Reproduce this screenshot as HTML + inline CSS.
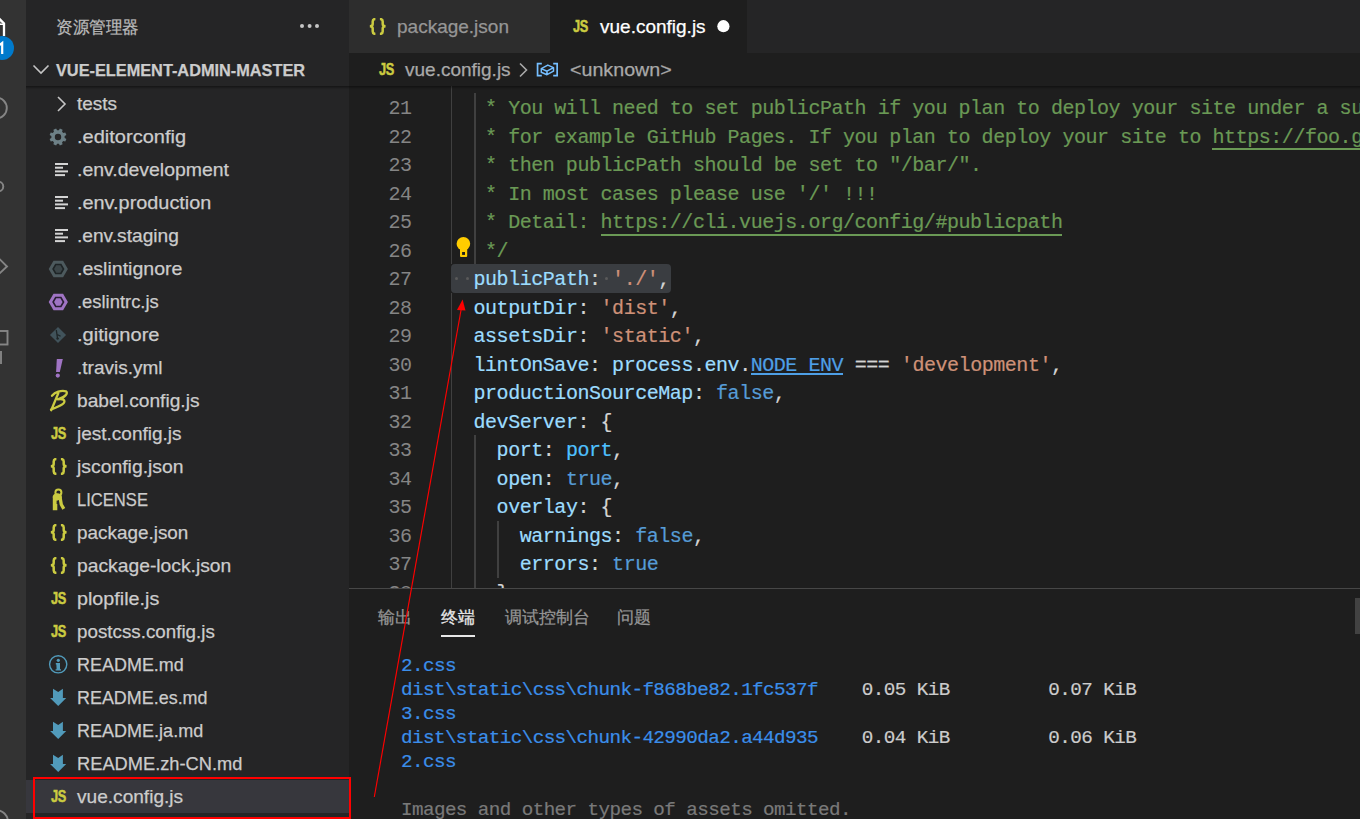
<!DOCTYPE html>
<html><head><meta charset="utf-8"><style>
*{margin:0;padding:0;box-sizing:border-box}
html,body{width:1360px;height:819px;overflow:hidden;background:#1e1e1e}
body{position:relative;font-family:"Liberation Sans",sans-serif}
.a{position:absolute}
.ui{font-family:"Liberation Sans",sans-serif;white-space:nowrap;transform-origin:0 50%;-webkit-text-stroke:0.25px currentColor}
.ln{left:0;width:62.5px;text-align:right;font-family:"Liberation Mono",monospace;font-size:20px;letter-spacing:-0.454px;line-height:28.5px;color:#858585}
.cl{left:101.4px;font-family:"Liberation Mono",monospace;font-size:20px;letter-spacing:-0.454px;line-height:28.5px;color:#d4d4d4;white-space:pre;-webkit-text-stroke:0.2px currentColor}
.c{color:#6a9955}.p{color:#9cdcfe}.s{color:#ce9178}.k{color:#569cd6}.v{color:#4fc1ff}
.u{text-decoration:underline;text-underline-offset:3px;text-decoration-thickness:1.5px}
.tl{left:401px;font-family:"Liberation Mono",monospace;font-size:19.25px;letter-spacing:-0.58px;line-height:24px;white-space:pre;color:#3b8eea;-webkit-text-stroke:0.2px currentColor}
</style></head><body>
<div class="a" style="left:0;top:0;width:26px;height:819px;background:#333333"></div>
<svg class="a" style="left:0px;top:0px" width="26" height="819" viewBox="0 0 26 819"><path d="M-8 36 L-8 19 L-0.5 19 L4 23.5 L4 36" fill="none" stroke="#ffffff" stroke-width="2.3"/><path d="M-0.5 19 L-0.5 24.3 L4 24.3" fill="none" stroke="#ffffff" stroke-width="1.4"/><circle cx="2" cy="48" r="12" fill="#007acc"/><path d="M-1 45.5 L2.2 43 L2.2 54" fill="none" stroke="#fff" stroke-width="2.2"/><circle cx="-3.5" cy="108" r="10.3" fill="none" stroke="#858585" stroke-width="1.9"/><circle cx="-1.5" cy="186.5" r="4.8" fill="none" stroke="#858585" stroke-width="1.9"/><path d="M-1 258.5 L7 266.5 L-1 274" fill="none" stroke="#858585" stroke-width="1.9"/><rect x="-6" y="331" width="13.5" height="13.5" fill="none" stroke="#858585" stroke-width="1.9"/><path d="M1 351 L1 364" fill="none" stroke="#858585" stroke-width="1.9"/><circle cx="-4" cy="822" r="12" fill="none" stroke="#858585" stroke-width="1.9"/></svg>
<div class="a" style="left:26px;top:0;width:323px;height:819px;background:#252526"></div>
<div class="a ui" style="left:56px;top:15px;font-size:16.5px;line-height:24px;color:#bbbbbb;transform:scaleX(0.975)">资源管理器</div>
<svg class="a" style="left:296px;top:20px" width="28" height="12" viewBox="0 0 28 12"><circle cx="6" cy="6" r="2" fill="#c5c5c5"/><circle cx="13.600000000000023" cy="6" r="2" fill="#c5c5c5"/><circle cx="21" cy="6" r="2" fill="#c5c5c5"/></svg>
<svg class="a" style="left:30px;top:60px" width="22" height="18" viewBox="0 0 22 18"><path d="M3.5 5.5 L11 13 L18.5 5.5" fill="none" stroke="#c5c5c5" stroke-width="1.6"/></svg>
<div class="a ui" style="left:56px;top:58px;font-weight:bold;font-size:16.5px;line-height:24px;color:#cccccc;transform:scaleX(0.988)">VUE-ELEMENT-ADMIN-MASTER</div>
<div class="a" style="left:26px;top:86px;width:323px;height:4px;background:linear-gradient(rgba(0,0,0,0.45),rgba(0,0,0,0.12) 60%,rgba(0,0,0,0))"></div>
<svg class="a" style="left:54px;top:94.5px" width="14" height="18" viewBox="0 0 14 18"><path d="M4 2 L11 9 L4 16" fill="none" stroke="#c5c5c5" stroke-width="1.6"/></svg>
<div class="a ui" style="left:77px;top:87px;line-height:33px;font-size:19px;color:#cccccc;transform:scaleX(0.9949)">tests</div>
<svg class="a" style="left:48.4px;top:126.5px" width="20" height="20" viewBox="0 0 20 20"><path d="M16.64,10.89 L18.39,11.90 L17.27,14.59 L15.32,14.07 L14.07,15.32 L14.59,17.27 L11.90,18.39 L10.89,16.64 L9.11,16.64 L8.10,18.39 L5.41,17.27 L5.93,15.32 L4.68,14.07 L2.73,14.59 L1.61,11.90 L3.36,10.89 L3.36,9.11 L1.61,8.10 L2.73,5.41 L4.68,5.93 L5.93,4.68 L5.41,2.73 L8.10,1.61 L9.11,3.36 L10.89,3.36 L11.90,1.61 L14.59,2.73 L14.07,4.68 L15.32,5.93 L17.27,5.41 L18.39,8.10 L16.64,9.11 Z M13.2 10 A3.2 3.2 0 1 0 6.8 10 A3.2 3.2 0 1 0 13.2 10 Z" fill="#6d8086" fill-rule="evenodd"/></svg>
<div class="a ui" style="left:77px;top:120px;line-height:33px;font-size:19px;color:#cccccc;transform:scaleX(1.0539)">.editorconfig</div>
<svg class="a" style="left:55px;top:162.5px" width="14" height="14" viewBox="0 0 14 14"><rect x="0" y="0" width="13" height="2" fill="#d4d4d4"/><rect x="0" y="3.7" width="8" height="2" fill="#d4d4d4"/><rect x="0" y="7.4" width="13" height="2" fill="#d4d4d4"/><rect x="0" y="11.1" width="10" height="2" fill="#d4d4d4"/></svg>
<div class="a ui" style="left:77px;top:153px;line-height:33px;font-size:19px;color:#cccccc;transform:scaleX(1.0230)">.env.development</div>
<svg class="a" style="left:55px;top:195.5px" width="14" height="14" viewBox="0 0 14 14"><rect x="0" y="0" width="13" height="2" fill="#d4d4d4"/><rect x="0" y="3.7" width="8" height="2" fill="#d4d4d4"/><rect x="0" y="7.4" width="13" height="2" fill="#d4d4d4"/><rect x="0" y="11.1" width="10" height="2" fill="#d4d4d4"/></svg>
<div class="a ui" style="left:77px;top:186px;line-height:33px;font-size:19px;color:#cccccc;transform:scaleX(1.0457)">.env.production</div>
<svg class="a" style="left:55px;top:228.5px" width="14" height="14" viewBox="0 0 14 14"><rect x="0" y="0" width="13" height="2" fill="#d4d4d4"/><rect x="0" y="3.7" width="8" height="2" fill="#d4d4d4"/><rect x="0" y="7.4" width="13" height="2" fill="#d4d4d4"/><rect x="0" y="11.1" width="10" height="2" fill="#d4d4d4"/></svg>
<div class="a ui" style="left:77px;top:219px;line-height:33px;font-size:19px;color:#cccccc;transform:scaleX(1.0080)">.env.staging</div>
<svg class="a" style="left:48px;top:258.5px" width="21" height="20" viewBox="0 0 21 20"><polygon points="19.90,10.00 15.10,18.31 5.50,18.31 0.70,10.00 5.50,1.69 15.10,1.69" fill="#4d5a5e"/><polygon points="15.50,10.00 12.90,14.50 7.70,14.50 5.10,10.00 7.70,5.50 12.90,5.50" fill="#3b4548" stroke="#1e2426" stroke-width="1.6"/></svg>
<div class="a ui" style="left:77px;top:252px;line-height:33px;font-size:19px;color:#cccccc;transform:scaleX(1.0297)">.eslintignore</div>
<svg class="a" style="left:48px;top:291.5px" width="21" height="20" viewBox="0 0 21 20"><polygon points="19.90,10.00 15.10,18.31 5.50,18.31 0.70,10.00 5.50,1.69 15.10,1.69" fill="#a074c4"/><polygon points="15.50,10.00 12.90,14.50 7.70,14.50 5.10,10.00 7.70,5.50 12.90,5.50" fill="#a074c4" stroke="#2a1f33" stroke-width="1.6"/></svg>
<div class="a ui" style="left:77px;top:285px;line-height:33px;font-size:19px;color:#cccccc;transform:scaleX(0.9679)">.eslintrc.js</div>
<svg class="a" style="left:49px;top:325.5px" width="18" height="18" viewBox="0 0 18 18"><rect x="3.3" y="3.3" width="11.4" height="11.4" transform="rotate(45 9 9)" fill="#41535b"/><path d="M7.3 3.8 L8.6 13 M8.2 8.5 L11.6 10.3" stroke="#1f2628" stroke-width="1.3" fill="none"/><circle cx="8.6" cy="12.6" r="1.2" fill="#1f2628"/></svg>
<div class="a ui" style="left:77px;top:318px;line-height:33px;font-size:19px;color:#cccccc;transform:scaleX(1.0558)">.gitignore</div>
<svg class="a" style="left:52px;top:355.5px" width="14" height="24" viewBox="0 0 14 24"><path d="M4.8 3 L10.8 3 L7.8 16 L4.1 16 Z" fill="#a074c4"/><circle cx="5.8" cy="19.6" r="2.1" fill="#a074c4"/></svg>
<div class="a ui" style="left:77px;top:351px;line-height:33px;font-size:19px;color:#cccccc;transform:scaleX(1.0000)">.travis.yml</div>
<svg class="a" style="left:45px;top:385px" width="30" height="30" viewBox="0 0 30 30"><path d="M7 10.8 C10 7.2, 16 5, 21 6.3 C23.5 7.8, 20.5 12.3, 12.8 14.3 C18 13.3, 21 15.3, 18.6 18.2 C16 20.8, 10.5 22.6, 6 24.6 M13.3 8.3 L6.2 25.3" fill="none" stroke="#cbcb41" stroke-width="2.3" stroke-linecap="round" stroke-linejoin="round"/></svg>
<div class="a ui" style="left:77px;top:384px;line-height:33px;font-size:19px;color:#cccccc;transform:scaleX(1.0083)">babel.config.js</div>
<div class="a" style="left:51px;top:428px;font:bold 15.6px 'Liberation Sans';color:#cbcb41;letter-spacing:-0.5px;line-height:12px;transform:scaleX(0.82);transform-origin:0 0;-webkit-text-stroke:0.5px #cbcb41">JS</div>
<div class="a ui" style="left:77px;top:417px;line-height:33px;font-size:19px;color:#cccccc;transform:scaleX(1.0000)">jest.config.js</div>
<svg class="a" style="left:50px;top:458.0px" width="18" height="17" viewBox="0 0 18 17"><path d="M6.4 1 C4.4 1 3.7 1.9 3.7 3.6 L3.7 6 C3.7 7.3 2.6 8.2 0.9 8.3 C2.6 8.4 3.7 9.3 3.7 10.6 L3.7 13.6 C3.7 15.1 4.4 15.9 6.4 15.9" fill="none" stroke="#cbcb41" stroke-width="2.5"/><path d="M10.9 1 C12.9 1 13.7 1.9 13.7 3.6 L13.7 6 C13.7 7.3 14.8 8.2 16.5 8.3 C14.8 8.4 13.7 9.3 13.7 10.6 L13.7 13.6 C13.7 15.1 12.9 15.9 10.9 15.9" fill="none" stroke="#cbcb41" stroke-width="2.5"/></svg>
<div class="a ui" style="left:77px;top:450px;line-height:33px;font-size:19px;color:#cccccc;transform:scaleX(1.0194)">jsconfig.json</div>
<svg class="a" style="left:45px;top:485px" width="30" height="30" viewBox="0 0 30 30"><circle cx="13.4" cy="7.4" r="3" fill="none" stroke="#cbcb41" stroke-width="2"/><ellipse cx="12.3" cy="11.8" rx="4.6" ry="3.6" fill="#cbcb41"/><path d="M7.8 12 L12.3 12 L12.3 15.5 L11 16 L12.3 17 L11 18 L12.3 19 L12.3 25.3 L7.8 25.3 Z" fill="#cbcb41"/><path d="M15 12 L16.3 19.5 L18.8 23.8" fill="none" stroke="#cbcb41" stroke-width="3.3" stroke-linejoin="round"/></svg>
<div class="a ui" style="left:77px;top:483px;line-height:33px;font-size:19px;color:#cccccc;transform:scaleX(0.8725)">LICENSE</div>
<svg class="a" style="left:50px;top:524.0px" width="18" height="17" viewBox="0 0 18 17"><path d="M6.4 1 C4.4 1 3.7 1.9 3.7 3.6 L3.7 6 C3.7 7.3 2.6 8.2 0.9 8.3 C2.6 8.4 3.7 9.3 3.7 10.6 L3.7 13.6 C3.7 15.1 4.4 15.9 6.4 15.9" fill="none" stroke="#cbcb41" stroke-width="2.5"/><path d="M10.9 1 C12.9 1 13.7 1.9 13.7 3.6 L13.7 6 C13.7 7.3 14.8 8.2 16.5 8.3 C14.8 8.4 13.7 9.3 13.7 10.6 L13.7 13.6 C13.7 15.1 12.9 15.9 10.9 15.9" fill="none" stroke="#cbcb41" stroke-width="2.5"/></svg>
<div class="a ui" style="left:77px;top:516px;line-height:33px;font-size:19px;color:#cccccc;transform:scaleX(0.9946)">package.json</div>
<svg class="a" style="left:50px;top:557.0px" width="18" height="17" viewBox="0 0 18 17"><path d="M6.4 1 C4.4 1 3.7 1.9 3.7 3.6 L3.7 6 C3.7 7.3 2.6 8.2 0.9 8.3 C2.6 8.4 3.7 9.3 3.7 10.6 L3.7 13.6 C3.7 15.1 4.4 15.9 6.4 15.9" fill="none" stroke="#cbcb41" stroke-width="2.5"/><path d="M10.9 1 C12.9 1 13.7 1.9 13.7 3.6 L13.7 6 C13.7 7.3 14.8 8.2 16.5 8.3 C14.8 8.4 13.7 9.3 13.7 10.6 L13.7 13.6 C13.7 15.1 12.9 15.9 10.9 15.9" fill="none" stroke="#cbcb41" stroke-width="2.5"/></svg>
<div class="a ui" style="left:77px;top:549px;line-height:33px;font-size:19px;color:#cccccc;transform:scaleX(1.0146)">package-lock.json</div>
<div class="a" style="left:51px;top:593px;font:bold 15.6px 'Liberation Sans';color:#cbcb41;letter-spacing:-0.5px;line-height:12px;transform:scaleX(0.82);transform-origin:0 0;-webkit-text-stroke:0.5px #cbcb41">JS</div>
<div class="a ui" style="left:77px;top:582px;line-height:33px;font-size:19px;color:#cccccc;transform:scaleX(1.0385)">plopfile.js</div>
<div class="a" style="left:51px;top:626px;font:bold 15.6px 'Liberation Sans';color:#cbcb41;letter-spacing:-0.5px;line-height:12px;transform:scaleX(0.82);transform-origin:0 0;-webkit-text-stroke:0.5px #cbcb41">JS</div>
<div class="a ui" style="left:77px;top:615px;line-height:33px;font-size:19px;color:#cccccc;transform:scaleX(0.9885)">postcss.config.js</div>
<svg class="a" style="left:45px;top:650px" width="30" height="33" viewBox="0 0 30 33"><circle cx="13.2" cy="14.3" r="8.6" fill="none" stroke="#519aba" stroke-width="1.4"/><circle cx="13.3" cy="10.3" r="1.6" fill="#519aba"/><path d="M11.3 13 L14.9 13 L14.9 19.2 L11.6 19.2 Z M10.6 19.2 L16 19.2 L16 20.5 L10.6 20.5 Z M10.8 13 L11.6 13 L11.6 14.4 L10.8 14.4 Z" fill="#519aba"/><rect x="12" y="13" width="3" height="6.3" fill="#519aba"/></svg>
<div class="a ui" style="left:77px;top:648px;line-height:33px;font-size:19px;color:#cccccc;transform:scaleX(0.9455)">README.md</div>
<svg class="a" style="left:45px;top:683px" width="30" height="33" viewBox="0 0 30 33"><path d="M8 5.8 L13.2 9 L17.9 5.8 L17.9 14.9 L21.2 14.9 L13.2 23 L5.1 14.9 L8 14.9 Z" fill="#519aba"/></svg>
<div class="a ui" style="left:77px;top:681px;line-height:33px;font-size:19px;color:#cccccc;transform:scaleX(0.9438)">README.es.md</div>
<svg class="a" style="left:45px;top:716px" width="30" height="33" viewBox="0 0 30 33"><path d="M8 5.8 L13.2 9 L17.9 5.8 L17.9 14.9 L21.2 14.9 L13.2 23 L5.1 14.9 L8 14.9 Z" fill="#519aba"/></svg>
<div class="a ui" style="left:77px;top:714px;line-height:33px;font-size:19px;color:#cccccc;transform:scaleX(0.9485)">README.ja.md</div>
<svg class="a" style="left:45px;top:749px" width="30" height="33" viewBox="0 0 30 33"><path d="M8 5.8 L13.2 9 L17.9 5.8 L17.9 14.9 L21.2 14.9 L13.2 23 L5.1 14.9 L8 14.9 Z" fill="#519aba"/></svg>
<div class="a ui" style="left:77px;top:747px;line-height:33px;font-size:19px;color:#cccccc;transform:scaleX(0.9614)">README.zh-CN.md</div>
<div class="a" style="left:26px;top:780px;width:323px;height:33px;background:#37373d"></div>
<div class="a" style="left:51px;top:791px;font:bold 15.6px 'Liberation Sans';color:#cbcb41;letter-spacing:-0.5px;line-height:12px;transform:scaleX(0.82);transform-origin:0 0;-webkit-text-stroke:0.5px #cbcb41">JS</div>
<div class="a ui" style="left:77px;top:780px;line-height:33px;font-size:19px;color:#cccccc;transform:scaleX(1.0048)">vue.config.js</div>
<div class="a" style="left:349px;top:0;width:1011px;height:53px;background:#252526"></div>
<div class="a" style="left:349px;top:0;width:201px;height:53px;background:#2d2d2d"></div>
<div class="a" style="left:550px;top:0;width:197px;height:53px;background:#1e1e1e"></div>
<svg class="a" style="left:369.3px;top:17.8px" width="18" height="17" viewBox="0 0 18 17"><path d="M6.4 1 C4.4 1 3.7 1.9 3.7 3.6 L3.7 6 C3.7 7.3 2.6 8.2 0.9 8.3 C2.6 8.4 3.7 9.3 3.7 10.6 L3.7 13.6 C3.7 15.1 4.4 15.9 6.4 15.9" fill="none" stroke="#cbcb41" stroke-width="2.5"/><path d="M10.9 1 C12.9 1 13.7 1.9 13.7 3.6 L13.7 6 C13.7 7.3 14.8 8.2 16.5 8.3 C14.8 8.4 13.7 9.3 13.7 10.6 L13.7 13.6 C13.7 15.1 12.9 15.9 10.9 15.9" fill="none" stroke="#cbcb41" stroke-width="2.5"/></svg>
<div class="a ui rt" style="left:397px;top:14px;line-height:26px;font-size:19px;color:#969696">package.json</div>
<div class="a" style="left:573px;top:20.5px;font:bold 15.6px 'Liberation Sans';color:#cbcb41;letter-spacing:-0.5px;line-height:12px;transform:scaleX(0.82);transform-origin:0 0;-webkit-text-stroke:0.5px #cbcb41">JS</div>
<div class="a ui rt" style="left:600px;top:14px;line-height:26px;font-size:19px;color:#ffffff">vue.config.js</div>
<svg class="a" style="left:716px;top:20px" width="14" height="14" viewBox="0 0 14 14"><circle cx="7.4" cy="6.2" r="6.1" fill="#ffffff"/></svg>
<div class="a" style="left:349px;top:53px;width:1011px;height:33px;background:#1e1e1e"></div>
<div class="a" style="left:379px;top:63.5px;font:bold 15.6px 'Liberation Sans';color:#cbcb41;letter-spacing:-0.5px;line-height:12px;transform:scaleX(0.82);transform-origin:0 0;-webkit-text-stroke:0.5px #cbcb41">JS</div>
<div class="a ui rt" style="left:405px;top:57px;line-height:26px;font-size:19px;color:#a9a9a9">vue.config.js</div>
<svg class="a" style="left:514px;top:58px" width="16" height="22" viewBox="0 0 16 22"><path d="M6 5.5 L12.5 12 L6 18.5" fill="none" stroke="#a9a9a9" stroke-width="1.6"/></svg>
<svg class="a" style="left:530px;top:56px" width="35" height="28" viewBox="0 0 35 28"><path d="M11.8 7.65 L7.55 7.65 L7.55 19.65 L11.8 19.65 M23.2 7.65 L27.15 7.65 L27.15 19.65 L23.2 19.65" fill="none" stroke="#75beff" stroke-width="1.7"/><path d="M11.3 12.6 L17.8 9.1 L23.5 11.6 L23.5 15.2 L17 18.7 L11.3 16.2 Z M11.3 12.6 L17 15.2 L23.5 11.6 M17 15.2 L17 18.7" fill="none" stroke="#75beff" stroke-width="1.5" stroke-linejoin="round"/></svg>
<div class="a ui rt" style="left:570px;top:57px;line-height:26px;font-size:19px;color:#a9a9a9;transform:scaleX(1.035)">&lt;unknown&gt;</div>
<div class="a" style="left:349px;top:86px;width:1011px;height:502px;overflow:hidden;background:#1e1e1e">
<div class="a" style="left:102.4px;top:178.25px;width:219.9px;height:28.5px;background:#3a3d41;border-radius:4px"></div>
<div class="a" style="left:101.9px;top:-49.75px;width:1.5px;height:228.00px;background:#404040"></div>
<div class="a" style="left:101.9px;top:206.75px;width:1.5px;height:370.50px;background:#404040"></div>
<div class="a" style="left:125.0px;top:7.25px;width:1.5px;height:171.00px;background:#404040"></div>
<div class="a" style="left:125.0px;top:349.25px;width:1.5px;height:228.00px;background:#404040"></div>
<div class="a" style="left:148.1px;top:434.75px;width:1.5px;height:57.00px;background:#404040"></div>
<div class="a" style="left:105.7px;top:191.00px;width:3px;height:3px;border-radius:50%;background:#5a5a5a"></div>
<div class="a" style="left:117.2px;top:191.00px;width:3px;height:3px;border-radius:50%;background:#5a5a5a"></div>
<div class="a" style="left:255.8px;top:191.00px;width:3px;height:3px;border-radius:50%;background:#5a5a5a"></div>
<div class="a ln" style="top:-19.25px">20</div>
<div class="a cl" style="top:-19.25px"><span class="c">  /**</span></div>
<div class="a ln" style="top:9.25px">21</div>
<div class="a cl" style="top:9.25px"><span class="c">   * You will need to set publicPath if you plan to deploy your site under a sub path,</span></div>
<div class="a ln" style="top:37.75px">22</div>
<div class="a cl" style="top:37.75px"><span class="c">   * for example GitHub Pages. If you plan to deploy your site to </span><span class="c">https://foo.github.io/bar/</span><span class="c">,</span></div>
<div class="a ln" style="top:66.25px">23</div>
<div class="a cl" style="top:66.25px"><span class="c">   * then publicPath should be set to &quot;/bar/&quot;.</span></div>
<div class="a ln" style="top:94.75px">24</div>
<div class="a cl" style="top:94.75px"><span class="c">   * In most cases please use &#x27;/&#x27; !!!</span></div>
<div class="a ln" style="top:123.25px">25</div>
<div class="a cl" style="top:123.25px"><span class="c">   * Detail: </span><span class="c">https://cli.vuejs.org/config/#publicpath</span></div>
<div class="a ln" style="top:151.75px">26</div>
<div class="a cl" style="top:151.75px"><span class="c">   */</span></div>
<div class="a ln" style="top:180.25px">27</div>
<div class="a cl" style="top:180.25px">  <span class="p">publicPath</span>: <span class="s">&#x27;./&#x27;</span>,</div>
<div class="a ln" style="top:208.75px">28</div>
<div class="a cl" style="top:208.75px">  <span class="p">outputDir</span>: <span class="s">&#x27;dist&#x27;</span>,</div>
<div class="a ln" style="top:237.25px">29</div>
<div class="a cl" style="top:237.25px">  <span class="p">assetsDir</span>: <span class="s">&#x27;static&#x27;</span>,</div>
<div class="a ln" style="top:265.75px">30</div>
<div class="a cl" style="top:265.75px">  <span class="p">lintOnSave</span>: <span class="p">process</span>.<span class="p">env</span>.<span style="color:#4e9fe6">NODE ENV</span> === <span class="s">&#x27;development&#x27;</span>,</div>
<div class="a ln" style="top:294.25px">31</div>
<div class="a cl" style="top:294.25px">  <span class="p">productionSourceMap</span>: <span class="k">false</span>,</div>
<div class="a ln" style="top:322.75px">32</div>
<div class="a cl" style="top:322.75px">  <span class="p">devServer</span>: {</div>
<div class="a ln" style="top:351.25px">33</div>
<div class="a cl" style="top:351.25px">    <span class="p">port</span>: <span class="v">port</span>,</div>
<div class="a ln" style="top:379.75px">34</div>
<div class="a cl" style="top:379.75px">    <span class="p">open</span>: <span class="k">true</span>,</div>
<div class="a ln" style="top:408.25px">35</div>
<div class="a cl" style="top:408.25px">    <span class="p">overlay</span>: {</div>
<div class="a ln" style="top:436.75px">36</div>
<div class="a cl" style="top:436.75px">      <span class="p">warnings</span>: <span class="k">false</span>,</div>
<div class="a ln" style="top:465.25px">37</div>
<div class="a cl" style="top:465.25px">      <span class="p">errors</span>: <span class="k">true</span></div>
<div class="a ln" style="top:493.75px">38</div>
<div class="a cl" style="top:493.75px">    },</div>
<div class="a" style="left:863.44px;top:62.35px;width:300.20px;height:2px;background:#6a9955"></div>
<div class="a" style="left:251.50px;top:147.85px;width:461.84px;height:2px;background:#6a9955"></div>
<div class="a" style="left:401.60px;top:287.45px;width:92.37px;height:1.8px;background:#4e9fe6"></div>
<svg class="a" style="left:96px;top:144px" width="40" height="35" viewBox="0 0 40 35"><circle cx="18.4" cy="13.7" r="6.8" fill="#ffcc00"/><rect x="15" y="17" width="7.2" height="10" rx="1" fill="#ffcc00"/><rect x="17.1" y="22" width="2.9" height="2.9" fill="#1e1e1e"/></svg>
</div>
<div class="a" style="left:349px;top:86px;width:1011px;height:4px;background:linear-gradient(rgba(0,0,0,0.45),rgba(0,0,0,0.12) 60%,rgba(0,0,0,0))"></div>
<div class="a" style="left:349px;top:588px;width:1011px;height:231px;background:#1e1e1e;border-top:1.5px solid #474747"></div>
<div class="a ui" style="left:378px;top:605px;font-size:16.5px;line-height:24px;color:#969696">输出</div>
<div class="a ui" style="left:441px;top:605px;font-size:16.5px;line-height:24px;color:#e7e7e7">终端</div>
<div class="a ui" style="left:505px;top:605px;font-size:16.5px;line-height:24px;color:#969696">调试控制台</div>
<div class="a ui" style="left:617px;top:605px;font-size:16.5px;line-height:24px;color:#969696">问题</div>
<div class="a" style="left:441px;top:634.5px;width:34px;height:2px;background:#e7e7e7"></div>
<div class="a" style="left:1355px;top:598px;width:5px;height:36px;background:#424242"></div>
<div class="a tl" style="top:654px">2.css</div>
<div class="a tl" style="top:678px">dist\static\css\chunk-f868be82.1fc537f    <span style="color:#cccccc">0.05 KiB</span>         <span style="color:#cccccc">0.07 KiB</span></div>
<div class="a tl" style="top:702px">3.css</div>
<div class="a tl" style="top:726px">dist\static\css\chunk-42990da2.a44d935    <span style="color:#cccccc">0.04 KiB</span>         <span style="color:#cccccc">0.06 KiB</span></div>
<div class="a tl" style="top:750px">2.css</div>
<div class="a tl" style="top:798px"><span style="color:#797979">Images and other types of assets omitted.</span></div>
<div class="a" style="left:33px;top:777px;width:318px;height:42px;border:2.3px solid #ff0000"></div>
<svg class="a" style="left:0px;top:0px" width="1360" height="819" viewBox="0 0 1360 819"><path d="M374.3 797 L461.4 308" stroke="#ff0000" stroke-width="1.15" fill="none"/><path d="M462.6 299.5 L457 310 L465.5 310.5 Z" fill="#ff0000"/></svg>
</body></html>
